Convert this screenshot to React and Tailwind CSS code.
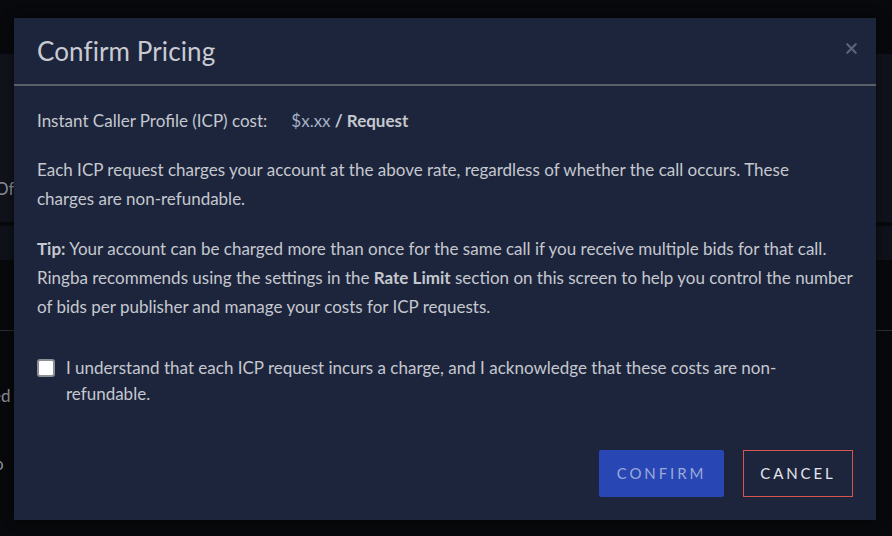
import React, { useState } from 'react';
import { X } from 'lucide-react';

const App = () => {
  const [agreed, setAgreed] = useState(false);

  return (
    <div className="relative w-[892px] h-[536px] overflow-hidden bg-[#08090c] font-['Lato','Noto_Sans',sans-serif]">
      {/* Page behind the overlay */}
      <div className="flex flex-col text-[#8b8f98] text-[17px]">
        <div className="h-[54px] bg-[#08090c]" />
        <div className="h-[168px] bg-[#10131b] flex items-start pt-[122px]">
          <span className="-ml-[5px]">Off</span>
        </div>
        <div className="h-[4px] bg-[#08090c]" />
        <div className="h-[34px] bg-[#0f121a]" />
        <div className="h-[71px] bg-[#08090c] border-b border-[#2a2d33]" />
        <div className="h-[77px] flex items-end">
          <span className="-ml-[8px]">ed</span>
        </div>
        <div className="h-[68px] flex items-end">
          <span className="-ml-[6px]">o</span>
        </div>
        <div className="pl-[84px] pt-[14px]">
          <div className="w-[62px] h-[20px] rounded-full bg-[#1a1e29]" />
        </div>
      </div>

      {/* Modal */}
      <div className="absolute left-[14px] top-[18px] w-[862px] h-[502px] bg-[#1d253d] shadow-[0_0_10px_rgba(0,0,0,0.6)] flex flex-col">
        <div className="h-[68px] flex items-center justify-between pl-[23px] pr-[17px] border-b-2 border-[#5a5e68]">
          <h2 className="text-[26px] text-[#c9cbd1] tracking-[0.1px]">Confirm Pricing</h2>
          <X className="w-[17px] h-[17px] text-[#5d6477] -mt-[5px] -mr-[1px]" strokeWidth={3} />
        </div>

        <div className="flex-1 flex flex-col px-[23px] pt-[20px] text-[17px] leading-[29px] text-[#c5c8ce]">
          <p>
            Instant Caller Profile (ICP) cost:
            <span className="ml-[24px] text-[#a4b0c4]">$x.xx</span>
            <span className="font-bold"> / Request</span>
          </p>

          <p className="mt-[20px] pr-[6px]">
            Each ICP request charges your account at the above rate, regardless of whether the call occurs. These charges are non-refundable.
          </p>

          <p className="mt-[21px]">
            <span className="font-bold">Tip:</span> Your account can be charged more than once for the same call if you receive multiple bids for that call. Ringba recommends using the settings in the <span className="font-bold">Rate Limit</span> section on this screen to help you control the number of bids per publisher and manage your costs for ICP requests.
          </p>

          <label className="mt-[34px] flex items-start gap-[11px] leading-[26px] cursor-pointer">
            <input
              type="checkbox"
              checked={agreed}
              onChange={(e) => setAgreed(e.target.checked)}
              className="mt-[4px] w-[18px] h-[18px] shrink-0 appearance-none rounded-[3px] bg-white border-2 border-[#8c8f96] checked:bg-[#2847b3]"
            />
            <span>I understand that each ICP request incurs a charge, and I acknowledge that these costs are non-refundable.</span>
          </label>

          <div className="mt-auto mb-[23px] flex justify-end gap-[19px]">
            <button className="w-[125px] h-[47px] rounded-[2px] bg-[#2846b4] text-[#9babd9] text-[15px] tracking-[2.9px]">
              CONFIRM
            </button>
            <button className="w-[110px] h-[47px] border border-[#d9534f] text-[#e4e6ea] text-[15px] tracking-[2.9px]">
              CANCEL
            </button>
          </div>
        </div>
      </div>
    </div>
  );
};

export default App;
